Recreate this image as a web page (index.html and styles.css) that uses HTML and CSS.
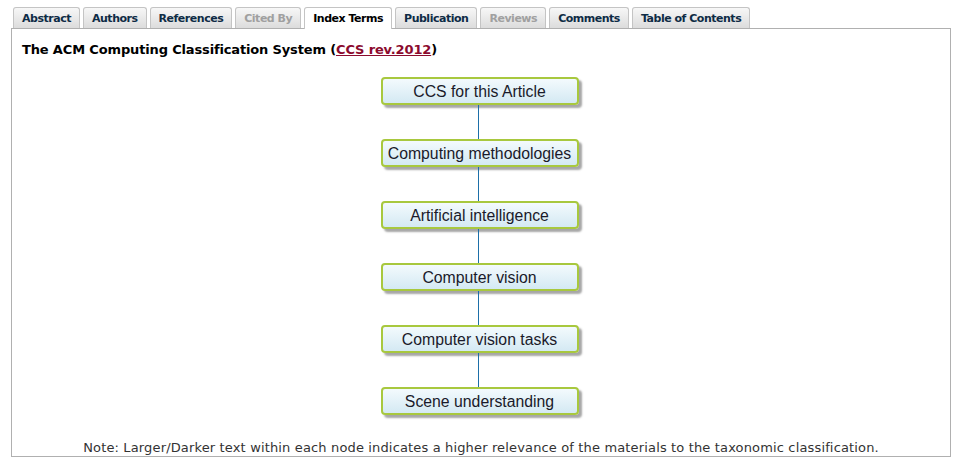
FILE: index.html
```html
<!DOCTYPE html>
<html>
<head>
<meta charset="utf-8">
<link rel="stylesheet" href="styles.css">
</head>
<body>
<div class="page">
  <ul class="tabs">
    <li class="tab">Abstract</li>
    <li class="tab">Authors</li>
    <li class="tab">References</li>
    <li class="tab disabled">Cited By</li>
    <li class="tab active">Index Terms</li>
    <li class="tab">Publication</li>
    <li class="tab disabled">Reviews</li>
    <li class="tab">Comments</li>
    <li class="tab">Table of Contents</li>
  </ul>
  <div class="panel">
    <h2 class="title">The ACM Computing Classification System (<a href="#" class="link">CCS rev.2012</a>)</h2>
    <div class="tree">
      <div class="node">CCS for this Article</div>
      <div class="line"></div>
      <div class="node">Computing methodologies</div>
      <div class="line"></div>
      <div class="node">Artificial intelligence</div>
      <div class="line"></div>
      <div class="node">Computer vision</div>
      <div class="line"></div>
      <div class="node">Computer vision tasks</div>
      <div class="line"></div>
      <div class="node">Scene understanding</div>
    </div>
    <p class="note">Note: Larger/Darker text within each node indicates a higher relevance of the materials to the taxonomic classification.</p>
  </div>
</div>
</body>
</html>
```
FILE: styles.css
```css
html, body {
  margin: 0;
  padding: 0;
  background: #fff;
}
.page {
  padding: 7px 0 0 11px;
  width: 940px;
}
.tabs {
  list-style: none;
  margin: 0;
  padding: 0 0 0 2px;
  display: flex;
  gap: 3px;
  height: 21px;
}
.tab {
  font-family: "DejaVu Sans", Verdana, sans-serif;
  font-weight: bold;
  font-size: 11px;
  letter-spacing: -0.48px;
  color: #0e2b45;
  height: 20px;
  line-height: 22px;
  padding: 0 8px;
  border: 1px solid #c4c4c4;
  border-bottom: none;
  border-radius: 3px 3px 0 0;
  background: linear-gradient(#f7f7f7, #dcdcdc);
}
.tab.disabled {
  color: #a0a0a0;
}
.tab.active {
  background: #fff;
  color: #000;
  height: 21px;
}
.panel {
  border: 1px solid #b0b0b0;
  height: 429px;
  box-sizing: border-box;
  overflow: hidden;
}
.title {
  margin: 13px 0 0 10px;
  font-family: "DejaVu Sans", Verdana, sans-serif;
  font-weight: bold;
  font-size: 13px;
  letter-spacing: -0.15px;
  line-height: 16px;
  color: #000;
}
.link {
  color: #8b0a2e;
  text-decoration: underline;
}
.tree {
  display: flex;
  flex-direction: column;
  align-items: center;
  margin-top: 19px;
  margin-left: -3px;
}
.node {
  width: 198px;
  height: 28px;
  box-sizing: border-box;
  padding-top: 2px;
  border: 2px solid #a8c83e;
  border-radius: 4px;
  background: linear-gradient(#f3fafd, #d4e9f3);
  box-shadow: 3px 3px 2px rgba(0, 0, 0, 0.35);
  font-family: "Liberation Sans", Arial, sans-serif;
  font-size: 15.8px;
  color: #1a1a2a;
  display: flex;
  align-items: center;
  justify-content: center;
}
.line {
  width: 1px;
  height: 34px;
  background: #1d6fa8;
  margin-left: -3px;
}
.note {
  margin: 25px 0 0 0;
  text-align: center;
  font-family: "DejaVu Sans", Verdana, sans-serif;
  font-size: 13px;
  letter-spacing: 0.15px;
  color: #333;
  line-height: 16px;
}
```
